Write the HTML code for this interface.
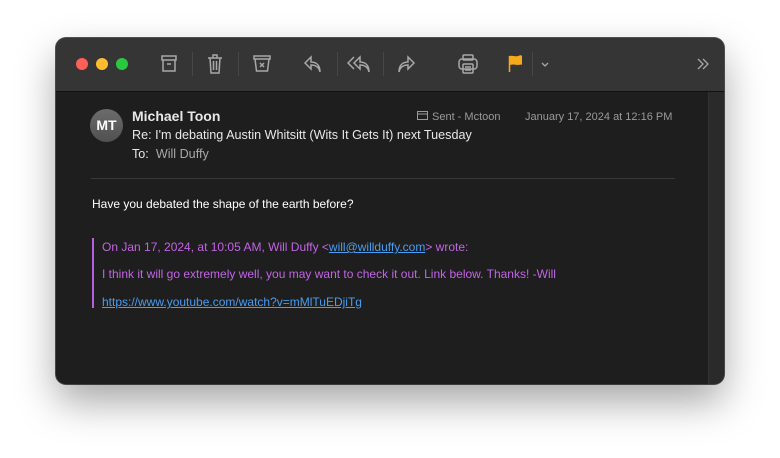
<!DOCTYPE html>
<html><head><style>
body{margin:0;width:780px;height:458px;background:#fff;font-family:"Liberation Sans",sans-serif;position:relative;overflow:hidden}
.win{position:absolute;left:56px;top:38px;width:668px;height:346px;border-radius:10px;background:#1e1e1e;overflow:hidden;box-shadow:0 18px 40px rgba(0,0,0,.35),0 0 0 1px #555}
.tb{position:absolute;left:0;top:0;width:668px;height:53px;background:#353535;border-bottom:1px solid #111}
.dot{position:absolute;top:20px;width:12px;height:12px;border-radius:50%}
.sep{position:absolute;top:14px;width:1px;height:24px;background:#474747}
svg.i{position:absolute;top:14px}
.sb{position:absolute;right:0;top:54px;width:15px;height:292px;background:#2a2a2a;border-left:1px solid #333}
.t{position:absolute;white-space:nowrap}
.u{color:#4a9cf0;text-decoration:underline}
</style></head><body>
<div class="win">
<div class="tb">
<div class="dot" style="left:20px;background:#fe5f57"></div>
<div class="dot" style="left:40px;background:#febc2e"></div>
<div class="dot" style="left:60px;background:#28c840"></div>
<svg class="i" style="left:103px" width="20" height="24" viewBox="0 0 20 24" fill="none" stroke="#a8a8a8" stroke-width="1.5"><rect x="3" y="4" width="14" height="4"/><path d="M4 8v11h12V8M8 12h4"/></svg>
<div class="sep" style="left:136px"></div>
<svg class="i" style="left:149px" width="20" height="24" viewBox="0 0 20 24" fill="none" stroke="#a8a8a8" stroke-width="1.5"><path d="M3 6h14M8 6V3h4v3M5 6l1 15h8l1-15M8.5 9v9M11.5 9v9"/></svg>
<div class="sep" style="left:182px"></div>
<svg class="i" style="left:196px" width="20" height="24" viewBox="0 0 20 24" fill="none" stroke="#a8a8a8" stroke-width="1.5"><rect x="2" y="4" width="16" height="3"/><path d="M3 7l1.5 12h11L17 7M8 11l4 4M12 11l-4 4"/></svg>
<svg class="i" style="left:246px" width="22" height="24" viewBox="0 0 22 24" fill="none" stroke="#a8a8a8" stroke-width="1.5"><path d="M9 5L3 11l6 6V13c5 0 8 2 9 7 0-6-3-10-9-10V5z"/></svg>
<div class="sep" style="left:281px"></div>
<svg class="i" style="left:291px" width="26" height="24" viewBox="0 0 26 24" fill="none" stroke="#a8a8a8" stroke-width="1.5"><path d="M7 5L1 11l6 6M13 5L7 11l6 6V13c5 0 8 2 9 7 0-6-3-10-9-10V5z"/></svg>
<div class="sep" style="left:327px"></div>
<svg class="i" style="left:339px" width="22" height="24" viewBox="0 0 22 24" fill="none" stroke="#a8a8a8" stroke-width="1.5"><path d="M13 5l6 6-6 6V13c-5 0-8 2-9 7 0-6 3-10 9-10V5z"/></svg>
<svg class="i" style="left:401px" width="22" height="24" viewBox="0 0 22 24" fill="none" stroke="#a8a8a8" stroke-width="1.5"><rect x="6" y="3" width="10" height="5" rx="1"/><rect x="2" y="7" width="18" height="10" rx="3"/><rect x="6" y="12" width="10" height="9" rx="1"/><path d="M8 15h6M8 18h6"/></svg>
<svg class="i" style="left:450px" width="18" height="24" viewBox="0 0 18 24"><path d="M3 4c4-1 6 1 9 0s3-1 4 0v9c-1-1-2 0-4 0s-5-1-8 0H3z" fill="#f7a91c"/><path d="M3.5 4v16" stroke="#f7a91c" stroke-width="1.5"/></svg>
<div class="sep" style="left:476px"></div>
<svg class="i" style="left:484px" width="10" height="24" viewBox="0 0 10 24" fill="none" stroke="#a8a8a8" stroke-width="1.3"><path d="M2 11l3 3 3-3"/></svg>
<svg class="i" style="left:640px" width="14" height="24" viewBox="0 0 14 24" fill="none" stroke="#a8a8a8" stroke-width="1.3"><path d="M2 7l5 5-5 5M7 7l5 5-5 5"/></svg>
</div>
<div class="sb"></div>
<div style="position:absolute;left:34px;top:71px;width:33px;height:33px;border-radius:50%;background:linear-gradient(#6c6c6c,#505050);color:#fff;font-size:14px;font-weight:bold;text-align:center;line-height:33px">MT</div>
<div class="t" style="left:76px;top:70px;color:#e8e8e8;font-size:14px;font-weight:bold">Michael Toon</div>
<div class="t" style="left:76px;top:90px;color:#e8e8e8;font-size:12.6px">Re: I'm debating Austin Whitsitt (Wits It Gets It) next Tuesday</div>
<div class="t" style="left:76px;top:109px;color:#e8e8e8;font-size:12.6px">To:&nbsp;&nbsp;<span style="color:#a8a8a8">Will Duffy</span></div>
<div class="t" style="left:361px;top:73px;color:#9a9a9a;font-size:11px"><svg width="11" height="9" viewBox="0 0 11 9" fill="none" stroke="#9a9a9a" style="margin-right:4px"><rect x=".5" y=".5" width="10" height="8"/><path d="M.5 3h10"/></svg>Sent - Mctoon</div>
<div class="t" style="left:469px;top:73px;color:#9a9a9a;font-size:11px">January 17, 2024 at 12:16 PM</div>
<div style="position:absolute;left:35px;top:140px;width:584px;height:1px;background:#383838"></div>
<div class="t" style="left:36px;top:159px;color:#fff;font-size:12px">Have you debated the shape of the earth before?</div>
<div style="position:absolute;left:36px;top:200px;width:2px;height:70px;background:#b65fe0"></div>
<div class="t" style="left:46px;top:202px;color:#c364e6;font-size:12px">On Jan 17, 2024, at 10:05 AM, Will Duffy &lt;<span class="u">will@willduffy.com</span>&gt; wrote:</div>
<div class="t" style="left:46px;top:229px;color:#c364e6;font-size:12px">I think it will go extremely well, you may want to check it out. Link below. Thanks! -Will</div>
<div class="t" style="left:46px;top:257px;font-size:12px"><span class="u">https://www.youtube.com/watch?v=mMlTuEDjiTg</span></div>
</div>
</body></html>
